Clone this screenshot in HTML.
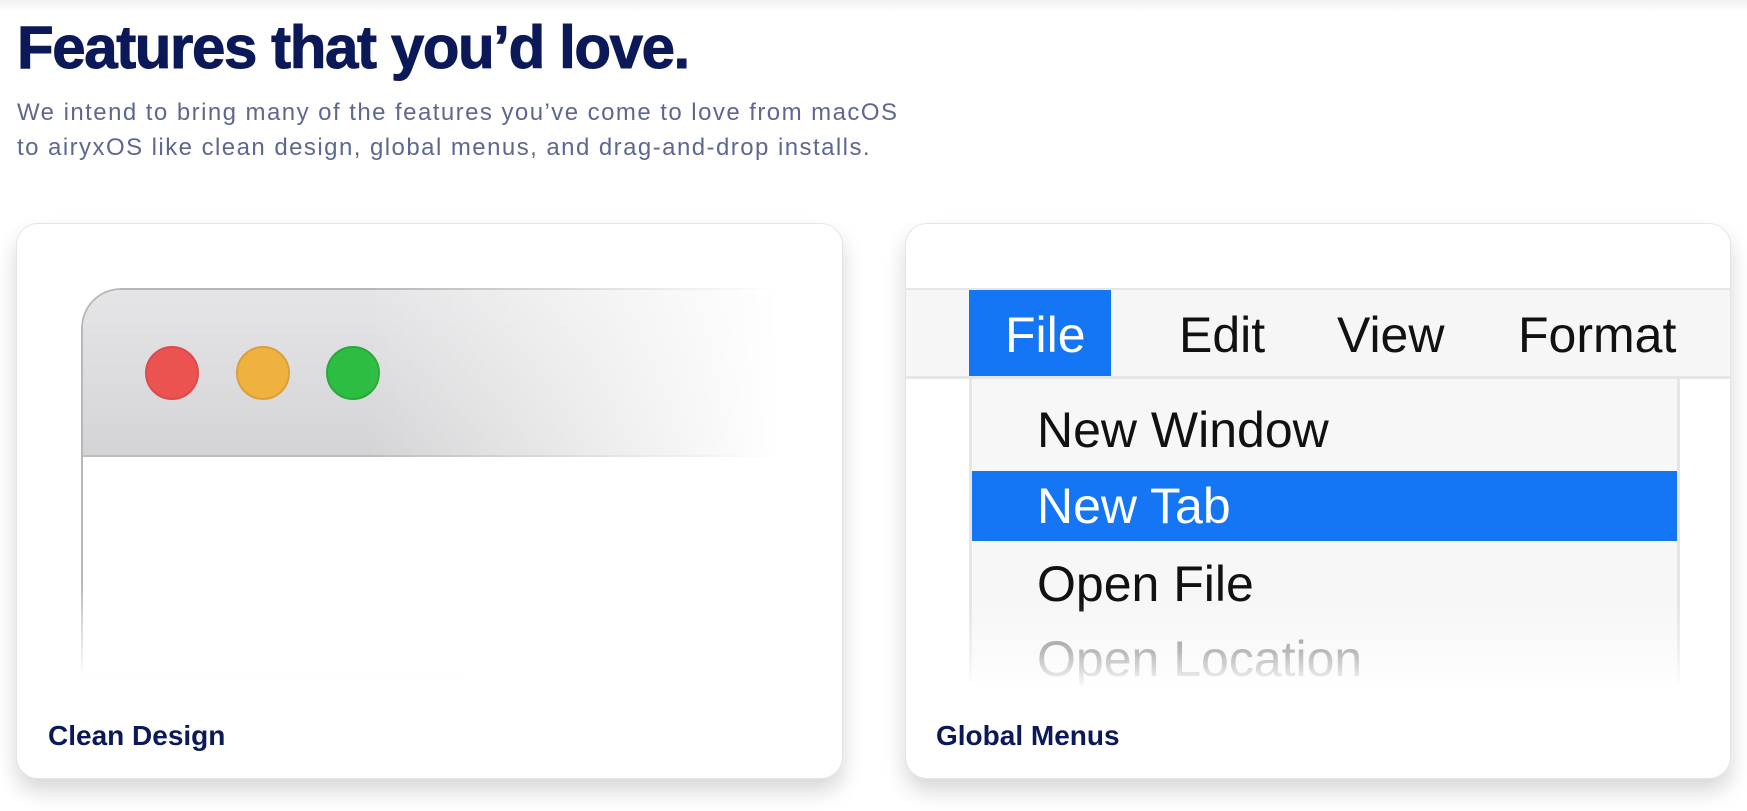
<!DOCTYPE html>
<html><head><meta charset="utf-8"><style>
*{margin:0;padding:0;box-sizing:border-box}
body{width:1747px;height:811px;background:#fff;position:relative;overflow:hidden;font-family:"Liberation Sans",sans-serif}
.topsh{position:absolute;left:0;top:0;width:1747px;height:12px;background:linear-gradient(#f1f1f3,#fff)}
h1{position:absolute;left:17px;top:15px;font-size:60px;line-height:66px;font-weight:700;color:#0c1958;letter-spacing:-1.4px;white-space:nowrap;-webkit-text-stroke:1px #0c1958}
.sub{position:absolute;left:17px;top:95px;font-size:24px;line-height:35px;color:#5d6890;white-space:nowrap;letter-spacing:1.45px}
.card{position:absolute;top:223px;height:556px;background:#fff;border:1px solid #e4e4ea;border-radius:22px;box-shadow:0 12px 22px rgba(0,0,0,.16);overflow:hidden}
.lbl{position:absolute;font-size:28px;font-weight:700;color:#0c1958;top:496px;letter-spacing:0}
.win{position:absolute;left:64px;top:64px;width:720px;height:390px;border:2px solid #b7b7b7;border-right:none;border-radius:40px 0 0 0;
 -webkit-mask-image:linear-gradient(to right,#000 0,#000 40%,transparent 97%),linear-gradient(#000 75%,transparent 100%);
 -webkit-mask-composite:source-in;mask-composite:intersect}
.tb{height:167px;background:linear-gradient(#e5e5e7,#d4d4d6);border-bottom:2px solid #bdbdbf;border-radius:38px 0 0 0;position:relative}
.dot{position:absolute;top:56px;width:54px;height:54px;border-radius:50%}
.mb{position:absolute;left:0;top:64px;width:100%;height:91px;background:#f6f6f6;border-top:2px solid #e6e6e6;border-bottom:3px solid #e6e6e6}
.m{position:absolute;font-size:50px;color:#111;top:10px;line-height:70px}
.dd{position:absolute;left:63px;top:155px;width:711px;height:310px;background:#f7f7f7;border-left:3px solid #e6e6e6;border-right:3px solid #e6e6e6;
 -webkit-mask-image:linear-gradient(#000 72%,rgba(0,0,0,.6) 88%,transparent 100%)}
.it{position:absolute;left:0;width:100%;height:70px;font-size:50px;line-height:70px;padding-left:65px;color:#111}
</style></head><body>
<div class="topsh"></div>
<h1>Features that you’d love.</h1>
<div class="sub">We intend to bring many of the features you’ve come to love from macOS<br>to airyxOS like clean design, global menus, and drag-and-drop installs.</div>

<div class="card" style="left:16px;width:827px">
 <div class="win"><div class="tb">
  <div class="dot" style="left:62px;background:#eb5351;border:2px solid #dc4b4b"></div>
  <div class="dot" style="left:153px;background:#f0b23e;border:2px solid #d9a03a"></div>
  <div class="dot" style="left:243px;background:#2ebd43;border:2px solid #27a93a"></div>
 </div></div>
 <div class="lbl" style="left:31px">Clean Design</div>
</div>

<div class="card" style="left:905px;width:826px">
 <div class="mb">
  <div style="position:absolute;left:63px;top:0;width:142px;height:86px;background:#1476f5"></div>
  <div class="m" style="left:99px;color:#fff">File</div>
  <div class="m" style="left:273px">Edit</div>
  <div class="m" style="left:431px">View</div>
  <div class="m" style="left:612px">Format</div>
 </div>
 <div class="dd">
  <div class="it" style="top:16px">New Window</div>
  <div class="it" style="top:92px;background:#1476f5;color:#fff">New Tab</div>
  <div class="it" style="top:170px">Open File</div>
  <div class="it" style="top:245px;color:#8a8a8a">Open Location</div>
 </div>
 <div class="lbl" style="left:30px">Global Menus</div>
</div>
</body></html>
